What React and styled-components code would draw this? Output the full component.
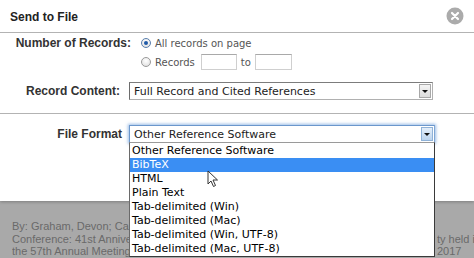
import React from 'react';
import styled, { createGlobalStyle } from 'styled-components';

const GlobalStyle = createGlobalStyle`
    html, body {
        margin: 0;
        padding: 0;
        background: #a9a9a9;
    }
    body {
        font-family: 'Liberation Sans', Arial, sans-serif;
    }
`;

const Page = styled.div`
    width: 474px;
    height: 258px;
    overflow: hidden;
    display: flex;
    flex-direction: column;
    position: relative;
`;

const Modal = styled.div`
    background: #fff;
    height: 207px;
    box-sizing: border-box;
    display: flex;
    flex-direction: column;
    box-shadow: 0 1px 3px rgba(0, 0, 0, 0.25);
    position: relative;
    z-index: 1;
`;

const Header = styled.div`
    height: 32px;
    flex-shrink: 0;
    display: flex;
    align-items: center;
    justify-content: space-between;
    padding: 0 10px 0 10px;
    border-bottom: 1px solid #b3b3b3;
`;

const Title = styled.div`
    font-weight: 700;
    font-size: 12px;
    color: #222;
    padding-top: 1px;
`;

const CloseButton = styled.button`
    width: 18px;
    height: 18px;
    padding: 0;
    border: none;
    background: none;
    display: flex;
    cursor: pointer;
`;

const Section = styled.div`
    padding: ${(p) => p.$pad};
    border-bottom: ${(p) => (p.$last ? 'none' : '1px solid #b3b3b3')};
    flex: ${(p) => (p.$last ? 1 : 'none')};
    display: flex;
    flex-direction: column;
`;

const FormRow = styled.div`
    display: flex;
    align-items: flex-start;
    gap: ${(p) => p.$gap}px;
    margin-top: ${(p) => p.$top || 0}px;
`;

const Label = styled.div`
    width: ${(p) => p.$w}px;
    flex-shrink: 0;
    text-align: right;
    font-weight: 700;
    font-size: 12px;
    line-height: 18px;
    color: #333;
`;

const RadioGroup = styled.div`
    display: flex;
    flex-direction: column;
    gap: 1px;
`;

const RadioRow = styled.label`
    height: 18px;
    display: flex;
    align-items: center;
    gap: 4px;
    font-family: 'DejaVu Sans', Verdana, sans-serif;
    font-size: 10px;
    color: #555;
`;

const Radio = styled.span`
    width: 10px;
    height: 10px;
    box-sizing: border-box;
    border-radius: 50%;
    border: 1px solid ${(p) => (p.$checked ? '#5a7fae' : '#9a9a9a')};
    background: radial-gradient(circle at 50% 35%, #fff 0%, #e6e6e6 70%, #cfcfcf 100%);
    display: flex;
    align-items: center;
    justify-content: center;
    &::after {
        content: '';
        width: 4px;
        height: 4px;
        border-radius: 50%;
        background: ${(p) => (p.$checked ? '#1f5aa8' : 'transparent')};
    }
`;

const TextInput = styled.span`
    width: ${(p) => p.$w}px;
    height: 16px;
    box-sizing: border-box;
    border: 1px solid #cfcfcf;
    border-top-color: #a9a9a9;
    background: #fff;
    margin: 0 ${(p) => p.$mr || 0}px 0 ${(p) => p.$ml || 0}px;
`;

const SelectBox = styled.div`
    position: relative;
    width: ${(p) => p.$w}px;
    height: 18px;
    box-sizing: border-box;
    border: 1px solid ${(p) => (p.$focus ? '#7fa6d3' : '#b0b0b0')};
    border-top-color: ${(p) => (p.$focus ? '#6b97cc' : '#7c7c7c')};
    border-left-color: ${(p) => (p.$focus ? '#6b97cc' : '#6c6c6c')};
    box-shadow: ${(p) => (p.$focus ? '0 0 3px 1px rgba(110, 160, 220, 0.7)' : 'none')};
    background: #fff;
    display: flex;
    align-items: center;
    justify-content: space-between;
    padding: 0 1px 0 4px;
    font-family: 'DejaVu Sans', Verdana, sans-serif;
    font-size: 11px;
    color: #222;
`;

const ArrowButton = styled.span`
    width: 12px;
    height: 14px;
    box-sizing: border-box;
    border: 1px solid ${(p) => (p.$focus ? '#8fb2d8' : '#a8a8a8')};
    background: ${(p) =>
        p.$focus
            ? 'linear-gradient(#e3eefa, #bcd4ee)'
            : 'linear-gradient(#f4f4f4, #dcdcdc)'};
    display: flex;
    align-items: center;
    justify-content: center;
    &::after {
        content: '';
        border-left: 3px solid transparent;
        border-right: 3px solid transparent;
        border-top: 3px solid #111;
    }
`;

const DropList = styled.ul`
    position: absolute;
    top: 17px;
    left: 0;
    width: 306px;
    box-sizing: border-box;
    margin: 0;
    padding: 1px 0 0;
    list-style: none;
    background: #fff;
    border: 1px solid #3a3a3a;
    border-top-color: #9a9a9a;
    border-left-color: #6a6a6a;
    z-index: 2;
`;

const Option = styled.li`
    height: 14px;
    line-height: 14px;
    padding-left: 2px;
    font-family: 'DejaVu Sans', Verdana, sans-serif;
    font-size: 11px;
    color: ${(p) => (p.$active ? '#fff' : '#000')};
    background: ${(p) => (p.$active ? '#3a8ef3' : 'transparent')};
    white-space: nowrap;
`;

const FieldWrap = styled.div`
    position: relative;
`;

const Pointer = styled.svg`
    position: absolute;
    left: 78px;
    top: 45px;
    z-index: 3;
`;

const Backdrop = styled.div`
    flex: 1;
    background: #a9a9a9;
    padding: 19px 0 0 12px;
    font-family: 'Liberation Sans', Arial, sans-serif;
    font-size: 11px;
    line-height: 12.7px;
    color: #6a6a6a;
`;

const BackLine = styled.div`
    display: grid;
    grid-template-columns: 425px 37px;
    white-space: nowrap;
    & > span {
        overflow: hidden;
    }
`;

const options = [
    'Other Reference Software',
    'BibTeX',
    'HTML',
    'Plain Text',
    'Tab-delimited (Win)',
    'Tab-delimited (Mac)',
    'Tab-delimited (Win, UTF-8)',
    'Tab-delimited (Mac, UTF-8)',
];

export default function App() {
    return (
        <Page>
            <GlobalStyle />
            <Modal>
                <Header>
                    <Title>Send to File</Title>
                    <CloseButton aria-label="Close">
                        <svg width="18" height="18" viewBox="0 0 18 18">
                            <circle cx="9" cy="9" r="8.5" fill="#ababab" />
                            <path d="M6 6 L12 12 M12 6 L6 12" stroke="#fff" strokeWidth="2.2" strokeLinecap="round" />
                        </svg>
                    </CloseButton>
                </Header>
                <Section $pad="1px 0 13px">
                    <FormRow $gap={10}>
                        <Label $w={131}>Number of Records:</Label>
                        <RadioGroup>
                            <RadioRow>
                                <Radio $checked />
                                All records on page
                            </RadioRow>
                            <RadioRow>
                                <Radio />
                                Records
                                <TextInput $w={36} $ml={2} />
                                to
                                <TextInput $w={37} />
                            </RadioRow>
                        </RadioGroup>
                    </FormRow>
                    <FormRow $gap={9} $top={11}>
                        <Label $w={120}>Record Content:</Label>
                        <SelectBox $w={304}>
                            Full Record and Cited References
                            <ArrowButton />
                        </SelectBox>
                    </FormRow>
                </Section>
                <Section $pad="11px 0 0" $last>
                    <FormRow $gap={7}>
                        <Label $w={122}>File Format</Label>
                        <FieldWrap>
                            <SelectBox $w={306} $focus>
                                Other Reference Software
                                <ArrowButton $focus />
                            </SelectBox>
                            <DropList>
                                {options.map((o) => (
                                    <Option key={o} $active={o === 'BibTeX'}>
                                        {o}
                                    </Option>
                                ))}
                            </DropList>
                            <Pointer width="12" height="18" viewBox="0 0 12 18">
                                <path
                                    d="M1 1 L1 14 L4 11 L6.5 16.5 L8.5 15.5 L6 10 L10.5 10 Z"
                                    fill="#fff"
                                    stroke="#333"
                                    strokeWidth="1"
                                    strokeLinejoin="round"
                                />
                            </Pointer>
                        </FieldWrap>
                    </FormRow>
                </Section>
            </Modal>
            <Backdrop>
                <BackLine>
                    <span>By: Graham, Devon; Cancela</span>
                    <span></span>
                </BackLine>
                <BackLine>
                    <span>Conference: 41st Anniver</span>
                    <span>ty held in</span>
                </BackLine>
                <BackLine>
                    <span>the 57th Annual Meeting</span>
                    <span>2017</span>
                </BackLine>
            </Backdrop>
        </Page>
    );
}
